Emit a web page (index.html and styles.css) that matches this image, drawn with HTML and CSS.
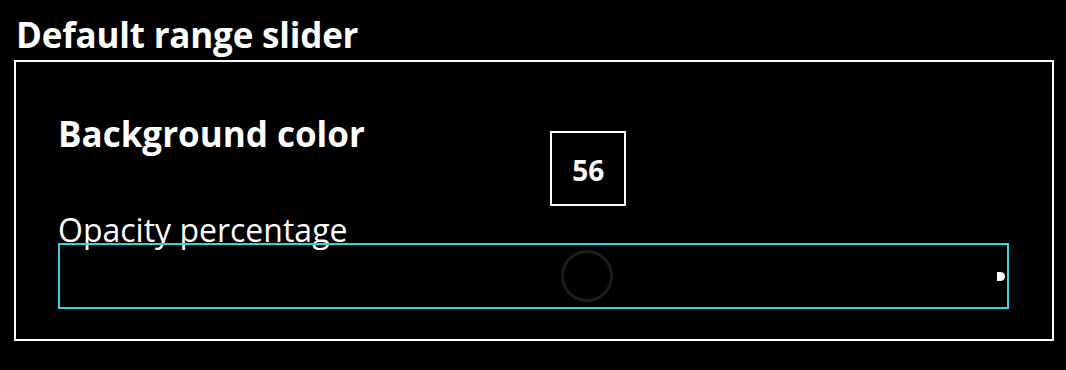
FILE: index.html
```html
<!DOCTYPE html>
<html lang="en">
<head>
<meta charset="utf-8">
<title>Default range slider</title>
<link rel="stylesheet" href="styles.css">
</head>
<body>
  <h2 class="page-title">Default range slider</h2>
  <section class="panel">
    <h3 class="panel-title">Background color</h3>
    <div class="field" style="--value: 0.56">
      <output class="bubble" for="opacity">56</output>
      <label class="field-label" for="opacity">Opacity percentage</label>
      <div class="slider-wrap">
        <input class="slider" id="opacity" type="range" min="0" max="100" value="56">
        <span class="track-end"></span>
      </div>
    </div>
  </section>
</body>
</html>
```

FILE: styles.css
```css
html, body {
  background: #000;
}

body {
  margin: 0;
  padding: 0 12px 0 14px;
  color: #fff;
  font-family: "Open Sans", "Noto Sans", sans-serif;
}

.page-title {
  margin: 14px 0 4px 2px;
  font-size: 35px;
  font-weight: 700;
  line-height: 42px;
  letter-spacing: -0.2px;
}

.panel {
  border: 2px solid #fff;
  padding: 51px 43px 32px 42px;
}

.panel-title {
  margin: 0;
  font-size: 35px;
  font-weight: 700;
  line-height: 42px;
}

.field {
  position: relative;
  margin-top: 57px;
}

.field-label {
  display: block;
  font-size: 32px;
  line-height: 33px;
  padding-top: 1px;
  margin-bottom: -1px;
}

.bubble {
  position: absolute;
  top: -81px;
  left: calc(2px + 26px + (100% - 4px - 52px) * var(--value) - 37px);
  width: 76px;
  height: 75px;
  box-sizing: border-box;
  border: 2px solid #fff;
  display: flex;
  align-items: center;
  justify-content: center;
  font-size: 28px;
  font-weight: 700;
  line-height: 1;
  padding-top: 2px;
}

.slider-wrap {
  position: relative;
  padding: 0 2px;
}

.slider {
  -webkit-appearance: none;
  appearance: none;
  display: block;
  width: 100%;
  height: 62px;
  margin: 0;
  background: transparent;
  outline: 2px solid #3ccfe0;
}

.slider::-webkit-slider-runnable-track {
  height: 62px;
  background: transparent;
  border: none;
}

.slider::-webkit-slider-thumb {
  -webkit-appearance: none;
  appearance: none;
  box-sizing: border-box;
  width: 52px;
  height: 52px;
  margin-top: 5px;
  border: 3px solid #1c1c1c;
  border-radius: 50%;
  background: transparent;
}

.track-end {
  position: absolute;
  right: 4px;
  top: 27px;
  width: 8px;
  height: 9px;
  background: #fff;
  border-radius: 0 5px 5px 0;
}
```
